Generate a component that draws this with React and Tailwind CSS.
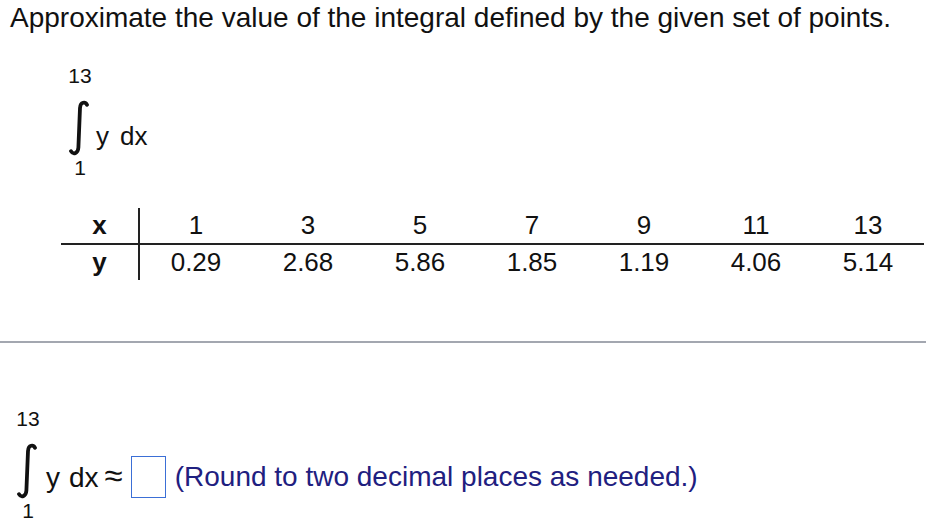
const XS = [1, 3, 5, 7, 9, 11, 13];
const YS = ["0.29", "2.68", "5.86", "1.85", "1.19", "4.06", "5.14"];

function IntegralSign() {
  return (
    <svg width="24" height="56" viewBox="0 0 24 56" className="block">
      <path
        d="M19 4.8 C17.4 1.6 12.4 1.4 12 8 L10.4 47.5 C10 54 5 54.8 3 51.2"
        fill="none"
        stroke="#111"
        strokeWidth="3.8"
        strokeLinecap="round"
      />
    </svg>
  );
}

function Limits() {
  return (
    <div className="flex flex-col items-center w-[24px] shrink-0">
      <div className="text-[21px] leading-[20px]">13</div>
      <div className="mt-[14px]">
        <IntegralSign />
      </div>
      <div className="mt-[2px] text-[21px] leading-[20px]">1</div>
    </div>
  );
}

export default function App() {
  return (
    <div className="w-[926px] h-[526px] overflow-hidden bg-white text-[#111] font-['Liberation_Sans',Arial,sans-serif]">
      {/* question */}
      <div className="pt-[2px] pl-[10px] text-[28px] leading-[32px] whitespace-nowrap">
        Approximate the value of the integral defined by the given set of points.
      </div>

      <div className="mt-[32px] ml-[68px] flex items-start">
        <Limits />
        <div className="mt-[55px] ml-[4px] text-[26px] leading-[30px] whitespace-nowrap">
          y<span className="ml-[11px]">dx</span>
        </div>
      </div>

      {/* data table */}
      <div className="mt-[30px] ml-[61px] grid grid-cols-[79px_repeat(7,112px)] text-[26px]">
        <div className="h-[37px] leading-[35px] border-r-2 border-b-2 border-[#222] text-center font-bold">x</div>
        {XS.map((v) => (
          <div key={v} className="h-[37px] leading-[35px] border-b-2 border-[#222] text-center">
            {v}
          </div>
        ))}
        <div className="h-[35px] leading-[35px] border-r-2 border-[#222] text-center font-bold">y</div>
        {YS.map((v) => (
          <div key={v} className="h-[35px] leading-[35px] text-center">
            {v}
          </div>
        ))}
      </div>

      <div className="mt-[61px] h-[2px] bg-[#a3a7b0]" />

      {/* answer */}
      <div className="mt-[66px] ml-[16px] flex items-start">
        <Limits />
        <div className="mt-[47px] ml-[6px] flex items-center h-[42px] text-[28px] leading-[32px] whitespace-nowrap">
          <span>
            y<span className="ml-[9px]">dx</span>
            <span className="ml-[6px] text-[33px] leading-[32px]">≈</span>
          </span>
          <div className="ml-[8px] w-[35px] h-[42px] border border-[#3b6fd6] bg-white" />
          <span className="ml-[9px] text-[#1f2080]">(Round to two decimal places as needed.)</span>
        </div>
      </div>
    </div>
  );
}
